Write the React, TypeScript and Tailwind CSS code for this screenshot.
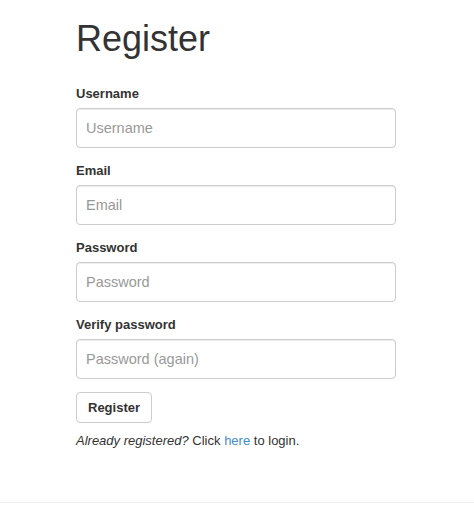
export default function App() {
  const fields = [
    { id: "username", label: "Username", type: "text", placeholder: "Username" },
    { id: "email", label: "Email", type: "email", placeholder: "Email" },
    { id: "password", label: "Password", type: "password", placeholder: "Password" },
    { id: "password2", label: "Verify password", type: "password", placeholder: "Password (again)" },
  ];

  return (
    <div className="min-h-[511px] bg-white text-[#333] font-['Liberation_Sans',Arial,sans-serif]">
      <div className="pl-[76px] pr-[79px] pt-[19px]">
        <h1 className="text-[36px] leading-[40px] font-normal mb-[26px]">Register</h1>
        <form onSubmit={(e) => e.preventDefault()}>
          {fields.map((f) => (
            <div key={f.id} className="mb-[14px] last:mb-[12px]">
              <label htmlFor={f.id} className="block text-[13px] leading-[17px] font-bold mb-[6px]">
                {f.label}
              </label>
              <input
                id={f.id}
                type={f.type}
                placeholder={f.placeholder}
                className="block w-[320px] h-[40px] px-[9px] text-[14.5px] bg-white border border-[#ccc] rounded-[4px] shadow-[inset_0_1px_1px_rgba(0,0,0,0.075)] placeholder:text-[#999] outline-none focus:border-[#66afe9]"
              />
            </div>
          ))}
          <button
            type="submit"
            className="block -mt-px h-[31px] px-[11px] text-[13px] leading-[17px] font-bold text-[#333] bg-white border border-[#ccc] rounded-[4px]"
          >
            Register
          </button>
        </form>
        <p className="mt-[9px] text-[13px] leading-[18.6px]">
          <em>Already registered?</em> Click{" "}
          <a href="#" className="text-[#428bca]">
            here
          </a>{" "}
          to login.
        </p>
      </div>
      <hr className="mt-[51px] border-0 border-t border-[#eee]" />
    </div>
  );
}
